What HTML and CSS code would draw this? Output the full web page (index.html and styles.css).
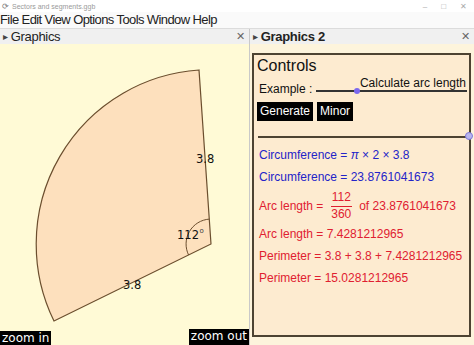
FILE: index.html
```html
<!DOCTYPE html>
<html lang="en">
  <head>
    <meta charset="UTF-8" />
    <title>Sectors and segments.ggb</title>
    <link rel="stylesheet" href="styles.css">
  </head>
  <body>
    <div class="titlebar">
      <span class="app-icon">&#10227;</span>
      <span class="title">Sectors and segments.ggb</span>
      <span class="win-btns"><span>&#8211;</span><span>&#9633;</span><span>&#10005;</span></span>
    </div>
    <div class="menubar">File Edit View Options Tools Window Help</div>

    <div class="panels">
      <div class="panel left">
        <div class="header">
          <span class="tri">&#9656;</span>
          <span class="name">Graphics</span>
          <span class="close">&#10005;</span>
        </div>
        <div class="canvas">
          <svg width="249" height="301" viewBox="0 44 249 301">
            <!-- sector, centre (211,244), r 174.6 -->
            <path d="M211 244 L199 70 A174.6 174.6 0 0 0 54 321 Z" fill="#fde0bd" stroke="#6b4e2e" stroke-width="1.2" />
            <path d="M209.3 219.1 A25 25 0 0 0 188.6 255" fill="none" stroke="#6b4e2e" stroke-width="1" />
            <text x="196" y="163" class="lbl">3.8</text>
            <text x="123" y="289" class="lbl">3.8</text>
            <text x="177" y="239" class="lbl">112<tspan class="deg" dx="0.5" dy="-6">o</tspan></text>
          </svg>
          <div class="zoom zoom-in">zoom in</div>
          <div class="zoom zoom-out">zoom out</div>
        </div>
      </div>

      <div class="panel right">
        <div class="header">
          <span class="tri">&#9656;</span>
          <span class="name bold">Graphics 2</span>
          <span class="close">&#10005;</span>
        </div>
        <div class="body">
          <div class="box">
            <div class="heading">Controls</div>
            <div class="example">
              <span>Example :</span>
              <div class="slider">
                <div class="slider-label">Calculate arc length</div>
                <div class="track"><span class="knob"></span></div>
              </div>
            </div>
            <div class="buttons">
              <span class="btn">Generate</span>
              <span class="btn">Minor</span>
            </div>
            <div class="rule"><span class="knob end"></span></div>
            <div class="lines">
              <div class="blue">Circumference = <i>&#960;</i> &times; 2 &times; 3.8</div>
              <div class="blue">Circumference = 23.8761041673</div>
              <div class="red frac-line">Arc length = <span class="frac"><span class="num">112</span><span class="den">360</span></span> of 23.8761041673</div>
              <div class="red">Arc length = 7.4281212965</div>
              <div class="red">Perimeter = 3.8 + 3.8 + 7.4281212965</div>
              <div class="red">Perimeter = 15.0281212965</div>
            </div>
          </div>
        </div>
      </div>
    </div>
  </body>
</html>
```

FILE: styles.css
```css
body {
  margin: 0;
  width: 474px;
  height: 345px;
  overflow: hidden;
  font-family: "Liberation Sans", Arial, sans-serif;
  background: #ffffff;
}
.titlebar {
  height: 12px;
  display: flex;
  align-items: center;
  background: #ffffff;
  color: #9a9a9a;
  font-size: 7px;
  padding-left: 2px;
}
.app-icon {
  font-size: 8px;
  margin-right: 3px;
  color: #777;
}
.title {
  flex: 1;
}
.win-btns {
  display: flex;
  gap: 14px;
  margin-right: 7px;
  color: #aaa;
  font-size: 8px;
}
.menubar {
  height: 16px;
  line-height: 16px;
  font-size: 13px;
  letter-spacing: -0.6px;
  color: #222;
  background: #fafafa;
  border-bottom: 1px solid #dcdcdc;
}
.panels {
  display: flex;
  height: 316px;
}
.panel {
  display: flex;
  flex-direction: column;
  min-width: 0;
  overflow: hidden;
}
.panel.left {
  width: 249px;
  flex: none;
  border-right: 1px solid #c9c9c9;
}
.panel.right {
  flex: 1;
}
.header {
  height: 15px;
  display: flex;
  align-items: center;
  background: #f0f0f0;
  color: #222;
  font-size: 13px;
  letter-spacing: -0.3px;
  padding-left: 3px;
}
.tri {
  font-size: 10px;
  color: #444;
  margin-right: 3px;
}
.name {
  flex: 1;
}
.bold {
  font-weight: bold;
}
.close {
  font-size: 11px;
  color: #666;
  margin-right: 4px;
}
.canvas {
  position: relative;
  flex: 1;
  background: #fffad6;
}
.canvas svg {
  display: block;
}
.lbl {
  font-family: "DejaVu Sans", sans-serif;
  font-size: 11.5px;
  fill: #111;
}
.deg {
  font-size: 7px;
  fill: #444;
}
.zoom {
  position: absolute;
  bottom: 0;
  background: #000;
  color: #fff;
  font-family: "DejaVu Sans", sans-serif;
  font-size: 12px;
  line-height: 15px;
  padding: 0 2px;
}
.zoom-in {
  left: 0;
  height: 14px;
}
.zoom-out {
  right: 0;
  height: 16px;
}
.body {
  flex: 1;
  background: #fdf4dc;
  padding: 9px 3px 8px 2px;
}
.box {
  height: 100%;
  box-sizing: border-box;
  background: #fdebd0;
  border: 2px solid #4d4332;
  padding: 0 2px 0 3px;
  color: #111;
  white-space: nowrap;
}
.heading {
  font-size: 16px;
  line-height: 21px;
}
.example {
  display: flex;
  align-items: flex-end;
  font-size: 12px;
  padding-left: 2px;
}
.slider {
  flex: 1;
  margin-left: 4px;
}
.slider-label {
  text-align: right;
  line-height: 14px;
  margin-right: 1px;
}
.track {
  position: relative;
  height: 2px;
  background: #333;
  margin-bottom: 4px;
}
.knob {
  position: absolute;
  left: 38px;
  top: -2px;
  width: 6px;
  height: 6px;
  border-radius: 50%;
  background: #7b68ee;
}
.buttons {
  display: flex;
  gap: 4px;
  margin-top: 6px;
}
.btn {
  background: #000;
  color: #fff;
  font-size: 12px;
  line-height: 19px;
  padding: 0 3px;
}
.rule {
  position: relative;
  height: 2px;
  background: #4d4332;
  margin: 15px 0 0 1px;
}
.knob.end {
  left: auto;
  right: -6px;
  top: -4px;
  width: 8px;
  height: 8px;
  background: #b9b6f0;
  border: 1px solid #7f79d8;
  box-sizing: border-box;
}
.lines {
  font-size: 12px;
  padding-left: 2px;
  margin-top: 6px;
}
.lines div {
  line-height: 22px;
}
.blue {
  color: #2424c8;
}
.red {
  color: #e02030;
}
.frac-line {
  display: flex;
  align-items: center;
  height: 35px;
  white-space: pre;
}
.frac {
  display: inline-flex;
  flex-direction: column;
  align-items: center;
  line-height: 15px;
  margin: 0 4px;
}
.num {
  border-bottom: 1px solid #e02030;
  padding: 0 1px 1px;
}
```
